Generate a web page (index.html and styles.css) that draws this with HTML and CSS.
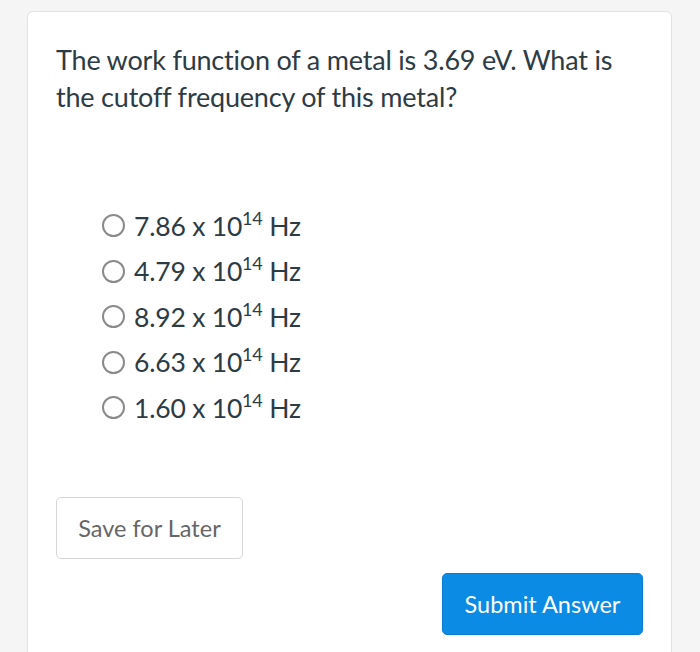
FILE: index.html
```html
<!DOCTYPE html>
<html>
<head>
<meta charset="utf-8">
<link rel="stylesheet" href="styles.css">
</head>
<body>
<div class="card">
  <p class="question">The work function of a metal is 3.69 eV. What is the cutoff frequency of this metal?</p>
  <ul class="options">
    <li class="option"><span class="radio"></span><span class="label">7.86 x 10<sup>14</sup> Hz</span></li>
    <li class="option"><span class="radio"></span><span class="label">4.79 x 10<sup>14</sup> Hz</span></li>
    <li class="option"><span class="radio"></span><span class="label">8.92 x 10<sup>14</sup> Hz</span></li>
    <li class="option"><span class="radio"></span><span class="label">6.63 x 10<sup>14</sup> Hz</span></li>
    <li class="option"><span class="radio"></span><span class="label">1.60 x 10<sup>14</sup> Hz</span></li>
  </ul>
  <div class="save-row"><button class="btn-save">Save for Later</button></div>
  <div class="submit-row"><button class="btn-submit">Submit Answer</button></div>
</div>
</body>
</html>
```
FILE: styles.css
```css
html, body {
  margin: 0;
  padding: 0;
  background: #f5f5f5;
  font-family: Lato, "Liberation Sans", sans-serif;
  color: #2d3b45;
}
.card {
  margin: 11px 0 0 27px;
  width: 643px;
  height: 700px;
  background: #fff;
  border: 1px solid #e2e2e2;
  border-radius: 6px;
  box-sizing: content-box;
  padding: 0;
}
.question {
  margin: 0;
  padding: 29px 28px 0 28px;
  font-size: 27px;
  line-height: 37px;
  letter-spacing: -0.2px;
  color: #2d3b45;
}
.options {
  list-style: none;
  margin: 0;
  padding: 88px 0 0 74px;
}
.option {
  display: flex;
  align-items: center;
  height: 45.5px;
  font-size: 26.5px;
  letter-spacing: -0.2px;
  color: #2d3b45;
}
.radio {
  width: 19px;
  height: 19px;
  border: 2px solid #8a8a8a;
  border-radius: 50%;
  margin-right: 9px;
  flex: none;
}
.label sup {
  font-size: 18px;
  vertical-align: 11px;
  line-height: 0;
}
.save-row {
  padding: 66px 0 0 28px;
}
.btn-save {
  font-family: inherit;
  font-size: 23.5px;
  color: #666;
  background: #fff;
  border: 1px solid #d6d6d6;
  border-radius: 5px;
  width: 187px;
  height: 62px;
  padding: 0;
}
.submit-row {
  display: flex;
  justify-content: flex-end;
  padding: 14px 28px 0 0;
}
.btn-submit {
  font-family: inherit;
  font-size: 23.5px;
  color: #fff;
  background: #0b8be3;
  border: 1px solid #0a7ecf;
  border-radius: 5px;
  width: 201px;
  height: 62px;
  padding: 0;
}
```
